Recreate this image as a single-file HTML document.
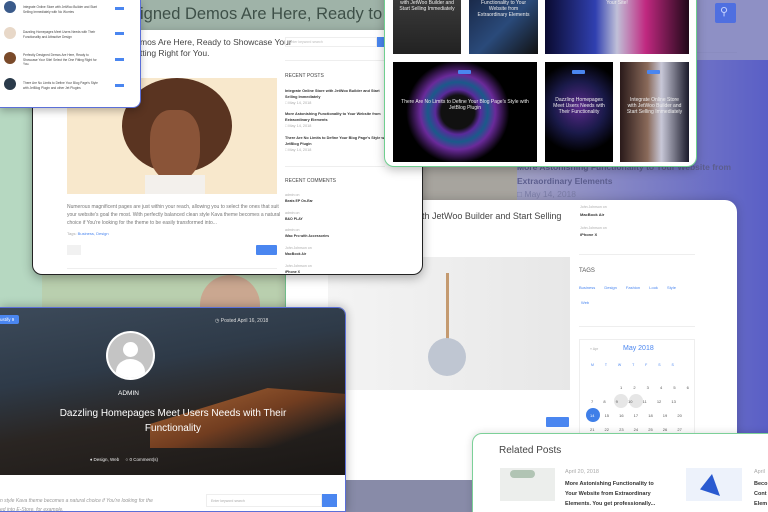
<!DOCTYPE html>
<html><head><meta charset="utf-8"><style>
*{margin:0;padding:0;box-sizing:border-box}
html,body{width:768px;height:512px;overflow:hidden}
body{position:relative;font-family:"Liberation Sans",sans-serif;background:linear-gradient(90deg,#b6d8c1 0%,#b3d2c0 35%,#9d9cc4 70%,#5a5fc6 100%)}
.a{position:absolute}
.t{position:absolute;white-space:nowrap}
.tile{position:absolute;background:#111;color:#eee;font-size:5px;text-align:center;overflow:hidden}
.pill{position:absolute;background:#4a86f0;color:#fff;font-size:3px;width:13px;height:4px;border-radius:1px}
</style></head><body>
<!-- background page -->
<div class="a" style="left:130px;top:0;width:580px;height:31px;background:#9fb3a8"></div>
<div class="t" style="left:140px;top:5px;font-size:16.5px;color:#3e5048">igned Demos Are Here, Ready to S</div>
<div class="a" style="left:697px;top:0;width:71px;height:60px;background:#8e90c5"></div>
<div class="a" style="left:715px;top:3px;width:21px;height:20px;background:#4f6fe0;border-radius:2px"></div>
<div class="t" style="left:720px;top:5px;color:#c9d4ff;font-size:11px">&#9906;</div>
<div class="a" style="left:697px;top:52px;width:40px;height:1px;background:#8a8cc0"></div>
<div class="a" style="left:422px;top:167px;width:95px;height:33px;background:#a7a49e"></div>
<div class="t" style="left:517px;top:162px;font-size:8.5px;font-weight:bold;color:#5c5e8e">More Astonishing Functionality to Your Website from</div>
<div class="t" style="left:517px;top:176px;font-size:8.5px;font-weight:bold;color:#5c5e8e">Extraordinary Elements</div>
<div class="t" style="left:517px;top:189px;font-size:8.5px;color:#7c7ea8">&#9633; May 14, 2018</div>
<!-- woman photo panel -->
<div class="a" style="left:42px;top:160px;width:244px;height:150px;background:#b9cfae;border-right:1px solid #7cd098"></div>
<div class="a" style="left:200px;top:275px;width:60px;height:35px;background:#caa790;border-radius:30px 30px 0 0"></div>
<!-- panel D -->
<div class="a" style="left:286px;top:200px;width:451px;height:280px;background:#fff;border-radius:0 12px 0 0;box-shadow:0 0 10px rgba(0,0,0,.2)"></div>
<div class="t" style="left:422px;top:211px;font-size:9px;color:#444">th JetWoo Builder and Start Selling</div>
<div class="a" style="left:328px;top:257px;width:242px;height:133px;background:linear-gradient(90deg,#f4f4f4,#e7e7e7)"></div>
<div class="a" style="left:446px;top:273px;width:3px;height:70px;background:#c49a70"></div>
<div class="a" style="left:428px;top:338px;width:38px;height:38px;border-radius:50%;background:#bfc6d2"></div>
<div class="a" style="left:546px;top:417px;width:23px;height:10px;background:#4a86f0;border-radius:1px"></div>
<div class="t" style="left:580px;top:205px;font-size:3.5px;color:#aaa">John Johnson on</div>
<div class="t" style="left:580px;top:212px;font-size:4px;color:#333;font-weight:bold">MacBook Air</div>
<div class="t" style="left:580px;top:226px;font-size:3.5px;color:#aaa">John Johnson on</div>
<div class="t" style="left:580px;top:232px;font-size:4px;color:#333;font-weight:bold">iPhone X</div>
<div class="a" style="left:579px;top:254px;width:116px;height:1px;background:#eee"></div>
<div class="t" style="left:579px;top:268px;font-size:6px;color:#555">TAGS</div>
<div class="t" style="left:579px;top:285px;font-size:4px;color:#4a86f0;word-spacing:8px">Business Design Fashion Look Style</div>
<div class="t" style="left:581px;top:300px;font-size:4px;color:#4a86f0">Web</div>
<div class="a" style="left:579px;top:326px;width:116px;height:1px;background:#eee"></div>
<div class="a" style="left:579px;top:339px;width:116px;height:141px;border:1px solid #eee"></div>
<div class="t" style="left:590px;top:347px;font-size:3.5px;color:#aaa">« Apr</div>
<div class="t" style="left:623px;top:345px;font-size:7px;color:#4a86f0">May 2018</div>
<div class="t" style="left:591px;top:363px;font-size:3.5px;color:#4a86f0;word-spacing:10px">M T W T F S S</div>
<div class="t" style="left:620px;top:385px;font-size:4px;color:#555;word-spacing:10px">1 2 3 4 5 6</div>
<div class="a" style="left:614px;top:394px;width:14px;height:14px;border-radius:50%;background:#e6e6e6"></div>
<div class="a" style="left:629px;top:394px;width:14px;height:14px;border-radius:50%;background:#e6e6e6"></div>
<div class="t" style="left:591px;top:399px;font-size:4px;color:#555;word-spacing:9px">7 8 9 10 11 12 13</div>
<div class="a" style="left:586px;top:408px;width:14px;height:14px;border-radius:50%;background:#3f7fe8"></div>
<div class="t" style="left:590px;top:413px;font-size:4px;color:#555;word-spacing:9px"><span style="color:#fff">14</span> 15 16 17 18 19 20</div>
<div class="t" style="left:590px;top:427px;font-size:4px;color:#555;word-spacing:9px">21 22 23 24 25 26 27</div>
<div class="a" style="left:346px;top:480px;width:130px;height:32px;background:#888ba8"></div>
<!-- panel B main blog -->
<div class="a" style="left:32px;top:30px;width:391px;height:245px;background:#fff;border:1.5px solid #222;border-top:none;border-radius:0 0 10px 10px;box-shadow:0 3px 10px rgba(0,0,0,.3)"></div>
<div class="t" style="left:140px;top:37px;font-size:8.5px;color:#444;line-height:11px">mos Are Here, Ready to Showcase Your<br>tting Right for You.</div>
<div class="a" style="left:67px;top:78px;width:210px;height:116px;background:#f8e8cc"></div>
<div class="a" style="left:122px;top:78px;width:110px;height:95px;border-radius:50%;background:#5a3421"></div>
<div class="a" style="left:150px;top:110px;width:50px;height:70px;border-radius:40%;background:#8a5438"></div>
<div class="a" style="left:145px;top:175px;width:60px;height:19px;background:#f3f0ec"></div>
<div class="t" style="left:67px;top:203px;font-size:5px;color:#777;line-height:8px">Numerous magnificent pages are just within your reach, allowing you to select the ones that suit<br>your website's goal the most. With perfectly balanced clean style Kava theme becomes a natural<br>choice if You're looking for the theme to be easily transformed into...</div>
<div class="t" style="left:67px;top:231px;font-size:4px;color:#aaa">Tags: <span style="color:#4a86f0">Business, Design</span></div>
<div class="a" style="left:67px;top:245px;width:14px;height:10px;background:#f1f1f1"></div>
<div class="a" style="left:256px;top:245px;width:21px;height:10px;background:#4a86f0;border-radius:1px"></div>
<div class="a" style="left:67px;top:268px;width:210px;height:1px;background:#eee"></div>
<div class="a" style="left:285px;top:37px;width:92px;height:10px;border:1px solid #eee"></div>
<div class="t" style="left:289px;top:40px;font-size:3.5px;color:#bbb">Enter keyword search</div>
<div class="a" style="left:377px;top:37px;width:8px;height:10px;background:#4a86f0"></div>
<div class="a" style="left:285px;top:60px;width:100px;height:1px;background:#eee"></div>
<div class="t" style="left:285px;top:73px;font-size:5px;color:#444">RECENT POSTS</div>
<div class="t" style="left:285px;top:88px;font-size:3.8px;color:#333;font-weight:bold;line-height:6px">Integrate Online Store with JetWoo Builder and Start<br>Selling Immediately<br><span style="font-weight:normal;color:#aaa">&#9633; May 14, 2018</span></div>
<div class="t" style="left:285px;top:111px;font-size:3.8px;color:#333;font-weight:bold;line-height:6px">More Astonishing Functionality to Your Website from<br>Extraordinary Elements<br><span style="font-weight:normal;color:#aaa">&#9633; May 14, 2018</span></div>
<div class="t" style="left:285px;top:135px;font-size:3.8px;color:#333;font-weight:bold;line-height:6px">There Are No Limits to Define Your Blog Page's Style with<br>JetBlog Plugin<br><span style="font-weight:normal;color:#aaa">&#9633; May 14, 2018</span></div>
<div class="a" style="left:285px;top:166px;width:100px;height:1px;background:#eee"></div>
<div class="t" style="left:285px;top:178px;font-size:5px;color:#444">RECENT COMMENTS</div>
<div class="t" style="left:285px;top:193px;font-size:3.5px;color:#333;line-height:5.9px"><span style="color:#aaa">admin on</span><br><b>Beats EP On-Ear</b><br><br><span style="color:#aaa">admin on</span><br><b>B&amp;O PLAY</b><br><br><span style="color:#aaa">admin on</span><br><b>iMac Pro with Accessories</b><br><br><span style="color:#aaa">John Johnson on</span><br><b>MacBook Air</b><br><br><span style="color:#aaa">John Johnson on</span><br><b>iPhone X</b></div>
<!-- panel A -->
<div class="a" style="left:0;top:0;width:141px;height:108px;background:#fff;border:1.5px solid #5b6fd8;border-top:none;border-left:none;border-radius:0 0 8px 0;box-shadow:0 3px 8px rgba(0,0,0,.25)"></div>
<div class="a" style="left:4px;top:1px;width:12px;height:12px;border-radius:50%;background:#3a5a8a"></div>
<div class="a" style="left:4px;top:27px;width:12px;height:12px;border-radius:50%;background:#e8d8c8"></div>
<div class="a" style="left:4px;top:52px;width:12px;height:12px;border-radius:50%;background:#7a4a2a"></div>
<div class="a" style="left:4px;top:78px;width:12px;height:12px;border-radius:50%;background:#2a3a4a"></div>
<div class="t" style="left:23px;top:5px;font-size:3.2px;color:#444;line-height:4.6px">Integrate Online Store with JetWoo Builder and Start<br>Selling Immediately with No Worries</div>
<div class="t" style="left:23px;top:30px;font-size:3.2px;color:#444;line-height:4.6px">Dazzling Homepages Meet Users Needs with Their<br>Functionality and Attractive Design</div>
<div class="t" style="left:23px;top:53px;font-size:3.2px;color:#444;line-height:4.6px">Perfectly Designed Demos Are Here, Ready to<br>Showcase Your Site! Select the One Fitting Right for<br>You.</div>
<div class="t" style="left:23px;top:81px;font-size:3.2px;color:#444;line-height:4.6px">There Are No Limits to Define Your Blog Page's Style<br>with JetBlog Plugin and other Jet Plugins</div>
<div class="a" style="left:115px;top:7px;width:9px;height:3px;background:#4a86f0"></div>
<div class="a" style="left:115px;top:32px;width:9px;height:3px;background:#4a86f0"></div>
<div class="a" style="left:115px;top:58px;width:9px;height:3px;background:#4a86f0"></div>
<div class="a" style="left:115px;top:84px;width:9px;height:3px;background:#4a86f0"></div>
<!-- panel C grid -->
<div class="a" style="left:384px;top:-10px;width:313px;height:177px;background:#fff;border:1.5px solid #6fcf8f;border-top:none;border-radius:0 0 10px 10px;box-shadow:0 3px 10px rgba(0,0,0,.25)"></div>
<div class="tile" style="left:393px;top:0;width:68px;height:54px;background:linear-gradient(#3a3a3a,#222)">with JetWoo Builder and<br>Start Selling Immediately</div>
<div class="tile" style="left:469px;top:0;width:69px;height:54px;background:linear-gradient(135deg,#1a2a4a,#2a4a7a,#111)">Functionality to Your<br>Website from<br>Extraordinary Elements</div>
<div class="tile" style="left:545px;top:0;width:144px;height:54px;background:linear-gradient(90deg,#0a0a30,#3040b0 35%,#c0c0d8 50%,#c02880 70%,#200818)">Your Site!</div>
<div class="tile" style="left:393px;top:62px;width:144px;height:100px;background:radial-gradient(circle at 45% 50%,#111 18%,#5a2a9a 24%,#1a5a8a 32%,#6a2a9a 40%,#000 55%)"><div style="margin-top:37px">There Are No Limits to Define Your Blog Page's Style with<br>JetBlog Plugin</div></div>
<div class="tile" style="left:545px;top:62px;width:68px;height:100px;background:radial-gradient(circle at 50% 45%,#5a2a8a,#1a1a4a 40%,#000 70%)"><div style="margin-top:35px">Dazzling Homepages<br>Meet Users Needs with<br>Their Functionality</div></div>
<div class="tile" style="left:620px;top:62px;width:69px;height:100px;background:linear-gradient(90deg,#2a1a1a,#8a6a5a 40%,#c8c8d8 60%,#1a1a2a)"><div style="margin-top:35px">Integrate Online Store<br>with JetWoo Builder and<br>Start Selling Immediately</div></div>
<div class="pill" style="left:458px;top:70px"></div><div class="pill" style="left:572px;top:70px"></div><div class="pill" style="left:647px;top:70px"></div>
<!-- mountain panel E -->
<div class="a" style="left:0;top:307px;width:346px;height:205px;background:#fff;border:1px solid #5b6fd8;border-left:none;border-radius:0 8px 0 0;overflow:hidden;box-shadow:0 0 10px rgba(0,0,0,.3)">
<div style="position:absolute;left:0;top:0;width:346px;height:167px;background:linear-gradient(170deg,#3c4a5a 0%,#2e3a48 35%,#2a2522 60%,#1a1715 100%)"></div>
<div style="position:absolute;left:150px;top:80px;width:196px;height:60px;background:linear-gradient(160deg,#b8703a,#7a4020 50%,transparent 80%);clip-path:polygon(0 60%,40% 20%,60% 0,100% 10%,100% 100%,0 100%);opacity:.9"></div>
</div>
<div class="a" style="left:0;top:315px;width:19px;height:9px;background:#4a86f0;border-radius:0 2px 2px 0"></div>
<div class="t" style="left:0;top:317px;font-size:4.5px;color:#fff">ustify 9</div>
<div class="t" style="left:215px;top:318px;font-size:5px;color:#ddd">&#9719; Posted April 16, 2018</div>
<div class="a" style="left:106px;top:331px;width:49px;height:49px;border-radius:50%;background:#fff"></div>
<div class="a" style="left:108px;top:333px;width:45px;height:45px;border-radius:50%;background:#c4c4c4;overflow:hidden"><div style="position:absolute;left:15px;top:9px;width:15px;height:15px;border-radius:50%;background:#fff"></div><div style="position:absolute;left:8px;top:26px;width:29px;height:25px;border-radius:50%;background:#fff"></div></div>
<div class="t" style="left:118px;top:390px;font-size:6.5px;color:#fff">ADMIN</div>
<div class="t" style="left:0;top:406px;width:346px;text-align:center;font-size:10px;color:#fff;line-height:15px">Dazzling Homepages Meet Users Needs with Their<br>Functionality</div>
<div class="t" style="left:90px;top:457px;font-size:4.5px;color:#eee">&#9830; Design, Web &nbsp;&nbsp;&nbsp; &#9675; 0 Comment(s)</div>
<div class="t" style="left:0;top:497px;font-size:5px;color:#999;font-style:italic;line-height:9px">n style Kava theme becomes a natural choice if You're looking for the<br>ed into E-Store, for example.</div>
<div class="a" style="left:206px;top:494px;width:116px;height:13px;border:1px solid #eee"></div>
<div class="t" style="left:211px;top:499px;font-size:3.5px;color:#aaa">Enter keyword search</div>
<div class="a" style="left:322px;top:494px;width:15px;height:13px;background:#4a86f0"></div>
<!-- related posts F -->
<div class="a" style="left:472px;top:433px;width:300px;height:85px;background:#fff;border:1.5px solid #7cd098;border-radius:10px 0 0 0;box-shadow:0 0 8px rgba(0,0,0,.15)"></div>
<div class="t" style="left:499px;top:445px;font-size:10px;color:#444">Related Posts</div>
<div class="a" style="left:500px;top:468px;width:55px;height:33px;background:#eceeec"></div>
<div class="a" style="left:510px;top:470px;width:25px;height:8px;background:#8aa890;border-radius:4px;opacity:.6"></div>
<div class="t" style="left:565px;top:469px;font-size:5.5px;color:#aaa">April 20, 2018</div>
<div class="t" style="left:565px;top:479px;font-size:5.5px;color:#333;font-weight:bold;line-height:10px">More Astonishing Functionality to<br>Your Website from Extraordinary<br>Elements. You get professionally...</div>
<div class="a" style="left:686px;top:468px;width:56px;height:33px;background:#edf2fb"></div>
<div class="a" style="left:700px;top:474px;width:20px;height:22px;background:#2a5ad0;clip-path:polygon(0 70%,60% 0,100% 100%)"></div>
<div class="t" style="left:754px;top:469px;font-size:5.5px;color:#aaa">April</div>
<div class="t" style="left:754px;top:479px;font-size:5.5px;color:#333;font-weight:bold;line-height:10px">Beco<br>Cont<br>Elem</div>
</body></html>
